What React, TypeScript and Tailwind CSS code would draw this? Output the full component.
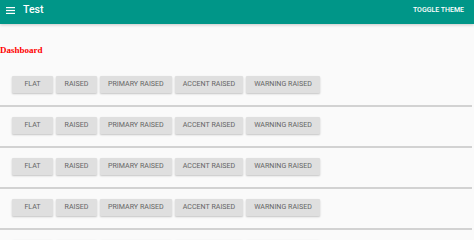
import React from "react";

const labels = ["FLAT", "RAISED", "PRIMARY RAISED", "ACCENT RAISED", "WARNING RAISED"];

function Row() {
  return (
    <div className="pt-[10px] pb-[12px] border-b-2 border-[#d2d2d2] mr-[2px]">
      <div className="flex pl-[12px] gap-[3px]">
        {labels.map((l) => (
          <div
            key={l}
            className="h-[17px] min-w-[41px] px-[8px] flex items-center justify-center bg-[#dfdfdf] text-[#666666] text-[7.1px] rounded-[1px] shadow-[0_1px_2px_rgba(0,0,0,0.22)] whitespace-nowrap"
            style={{ fontFamily: "Roboto, 'Liberation Sans', sans-serif" }}
          >
            {l}
          </div>
        ))}
      </div>
    </div>
  );
}

export default function App() {
  return (
    <div className="w-[474px] h-[240px] overflow-hidden bg-[#fafafa]" style={{ fontFamily: "Roboto, 'Liberation Sans', sans-serif" }}>
      <div className="h-[24px] bg-[#009688] flex items-center shadow-[0_1px_3px_rgba(0,0,0,0.2)] relative">
        <svg width="9" height="7" viewBox="0 0 9 7" className="ml-[6px] mb-[4px]">
          <rect x="0" y="0" width="9" height="1.2" fill="#fff" />
          <rect x="0" y="2.9" width="9" height="1.2" fill="#fff" />
          <rect x="0" y="5.8" width="9" height="1.2" fill="#fff" />
        </svg>
        <div className="ml-[8px] text-white text-[10.5px] font-medium mb-[4px]">Test</div>
        <div className="ml-auto mr-[10px] text-white text-[7px] font-medium mb-[4px]">TOGGLE THEME</div>
      </div>
      <h1
        className="mt-[21px] text-[9px] leading-[10px] font-bold text-[#ff0000]"
        style={{ fontFamily: "'Liberation Serif', serif" }}
      >
        Dashboard
      </h1>
      <div className="mt-[11px]">
        <Row />
        <Row />
        <Row />
        <Row />
        <Row />
      </div>
    </div>
  );
}
